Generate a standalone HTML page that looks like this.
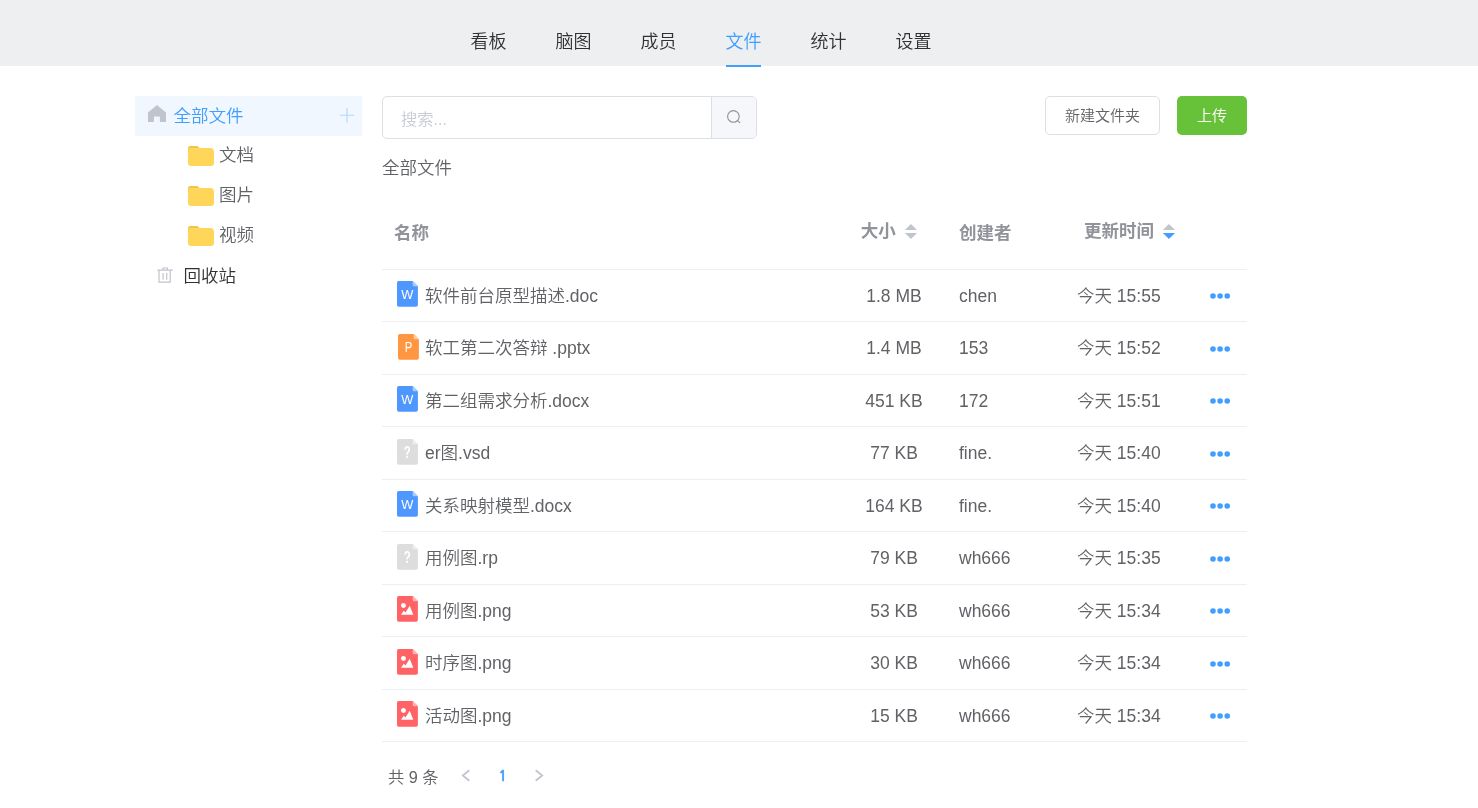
<!DOCTYPE html>
<html lang="zh-CN">
<head>
<meta charset="utf-8">
<title>文件</title>
<style>
*{box-sizing:border-box;margin:0;padding:0}
html,body{width:1478px;height:808px;overflow:hidden;background:#fff}
body{font-family:"Liberation Sans","Noto Sans CJK SC",sans-serif;color:#606266;position:relative;font-weight:350}
#wrap{position:absolute;left:0;top:0;width:1478px;height:808px;will-change:transform}
.abs{position:absolute}
#top{left:0;top:0;width:1478px;height:66px;background:#eeeff1}
.tab{position:absolute;top:28.6px;font-size:18px;line-height:26px;color:#303133;white-space:nowrap}
.tab.on{color:#409eff}
#tabline{left:726px;top:65px;width:35px;height:2px;background:#409eff}
#side-all{left:135px;top:96px;width:227px;height:40px;background:#f0f7ff}
.sl{position:absolute;font-size:17.5px;line-height:26px;white-space:nowrap;color:#606266}
#search{left:382px;top:96px;width:375px;height:43px;border:1px solid #dcdfe6;border-radius:5px;background:#fff}
#search .btn{position:absolute;right:0;top:0;width:45px;height:41px;background:#f5f7fa;border-left:1px solid #dcdfe6;border-radius:0 4px 4px 0}
#search .ph{position:absolute;left:18px;top:10.2px;font-size:16.25px;line-height:24px;color:#c8ccd3}
#newf{left:1045px;top:96px;width:115px;height:39px;border:1px solid #dcdfe6;border-radius:5px;font-size:15px;line-height:37px;text-align:center;color:#606266}
#upl{left:1177px;top:96px;width:70px;height:39px;border-radius:5px;background:#67c23a;font-size:15px;line-height:39px;text-align:center;color:#fff}
#crumb{left:382px;top:154.8px;font-size:17.5px;line-height:26px;color:#606266}
.th{position:absolute;font-size:17.5px;font-weight:bold;color:#909399;line-height:24px;white-space:nowrap}
.hl{position:absolute;left:382px;width:865px;height:1px;background:#ebeef5}
.row{position:absolute;left:382px;width:865px;height:52px;font-size:17.5px;color:#606266}
.row span{position:absolute;top:14px;line-height:24px;white-space:nowrap}
.row .nm{left:43px}
.row .sz{left:458px;width:108px;text-align:center}
.row .cr{left:577px}
.row .tm{left:695px}
.row .dots{position:absolute;left:828.2px;top:23.4px;width:20px;height:6px;fill:#409eff;overflow:visible}
.fold{left:188.1px;width:26px;height:20px}
.ico{position:absolute;left:14.8px;top:11.5px;width:20.9px;height:25.7px;overflow:visible}
</style>
</head>
<body>
<div id="wrap">
<svg width="0" height="0" style="position:absolute">
<defs>
<g id="ic-folder"><path d="M2.5 0H9.5L11.5 2H2.5V6H0V2.5A2.5 2.5 0 0 1 2.5 0z" fill="#f2c54a"/><path d="M0 4.5A2.5 2.5 0 0 1 2.5 2H22.5A3.5 3.5 0 0 1 26 5.5V17A3 3 0 0 1 23 20H3A3 3 0 0 1 0 17z" fill="#ffd659"/></g>
<g id="doc-shape"><path d="M1.8 0H15.7L20.9 5.2V23.9a1.8 1.8 0 0 1-1.8 1.8H1.8a1.8 1.8 0 0 1-1.8-1.8V1.8a1.8 1.8 0 0 1 1.8-1.8z"/></g>
<g id="ic-w"><use href="#doc-shape" fill="#4e97ff"/><path d="M15.7 0L20.9 5.2H17a1.3 1.3 0 0 1-1.3-1.3z" fill="#a9ccff"/><text x="10.25" y="17.7" text-anchor="middle" font-family="Liberation Sans, sans-serif" font-size="12.8" fill="#fff">W</text></g>
<g id="ic-p"><use href="#doc-shape" fill="#ff9742"/><path d="M15.7 0L20.9 5.2H17a1.3 1.3 0 0 1-1.3-1.3z" fill="#ffcba0"/><text x="10.5" y="18.2" text-anchor="middle" font-family="Liberation Sans, sans-serif" font-size="14.6" fill="#fff" textLength="7.6" lengthAdjust="spacingAndGlyphs">P</text></g>
<g id="ic-q"><use href="#doc-shape" fill="#dddddd"/><path d="M15.7 0L20.9 5.2H17a1.3 1.3 0 0 1-1.3-1.3z" fill="#eeeeee"/><text x="10.2" y="18.6" text-anchor="middle" font-family="Liberation Sans, sans-serif" font-size="16" font-weight="bold" fill="#fff" textLength="7" lengthAdjust="spacingAndGlyphs">?</text></g>
<g id="ic-i"><use href="#doc-shape" fill="#ff6366"/><path d="M15.7 0L20.9 5.2H17a1.3 1.3 0 0 1-1.3-1.3z" fill="#ffb1b3"/><circle cx="6.5" cy="9.4" r="2.5" fill="#fff"/><path d="M4 18.7L6.8 14.7L8.5 16.5L12.7 9.8L16.3 18.7z" fill="#fff"/></g>
</defs>
</svg>
<div id="top" class="abs"></div>
<div class="tab" style="left:470.6px">看板</div>
<div class="tab" style="left:555.6px">脑图</div>
<div class="tab" style="left:640.6px">成员</div>
<div class="tab on" style="left:725.6px">文件</div>
<div class="tab" style="left:810.6px">统计</div>
<div class="tab" style="left:895.6px">设置</div>
<div id="tabline" class="abs"></div>

<div id="side-all" class="abs"></div>
<div class="sl" style="left:173.5px;top:102.8px;color:#409eff">全部文件</div>
<div class="sl" style="left:219px;top:142px">文档</div>
<div class="sl" style="left:219px;top:182px">图片</div>
<div class="sl" style="left:219px;top:222px">视频</div>
<div class="sl" style="left:183.5px;top:263.4px;color:#303133">回收站</div>


<svg class="abs" style="left:148px;top:104.5px;width:18px;height:17.5px" viewBox="0 0 18 17.5"><path d="M9 0L18 7.6V17.5H11.9V11.4H5.9V17.5H0V7.6z" fill="#c0c4cc"/></svg>
<svg class="abs" style="left:339.6px;top:108.1px;width:14.6px;height:14.6px" viewBox="0 0 14.6 14.6"><path d="M7.0 0V14.6M0 7.3H14.6" stroke="#b0d6ff" stroke-width="1.15" fill="none"/></svg>
<svg class="abs fold" style="top:146px" viewBox="0 0 26 20"><use href="#ic-folder"/></svg>
<svg class="abs fold" style="top:186px" viewBox="0 0 26 20"><use href="#ic-folder"/></svg>
<svg class="abs fold" style="top:226px" viewBox="0 0 26 20"><use href="#ic-folder"/></svg>
<svg class="abs" style="left:156.5px;top:267px;width:16px;height:16.5px" viewBox="0 0 16 16.5"><path d="M0.4 3.1H15.8M6 3V1H10.4V3M2.0 3.4V15.1H13.2V3.4M6.1 6V12.7M9.7 6V12.7" stroke="#c0c4cc" stroke-width="1.2" fill="none"/></svg>
<svg class="abs" style="left:725px;top:108px;width:17px;height:17px;z-index:3" viewBox="0 0 17 17"><circle cx="8.4" cy="8.4" r="5.8" fill="none" stroke="#909399" stroke-width="1.15"/><path d="M12.6 12.6L14.7 14.7" stroke="#909399" stroke-width="1.15" stroke-linecap="round"/></svg>
<svg class="abs" style="left:904px;top:224px;width:14px;height:15px" viewBox="0 0 14 15"><path d="M0.9 5.9L6.95 0.1L13 5.9z" fill="#c0c4cc"/><path d="M0.9 9L6.95 14.9L13 9z" fill="#c0c4cc"/></svg>
<svg class="abs" style="left:1162px;top:224px;width:14px;height:15px" viewBox="0 0 14 15"><path d="M0.9 5.9L6.95 0.1L13 5.9z" fill="#c0c4cc"/><path d="M0.9 9L6.95 14.9L13 9z" fill="#409eff"/></svg>
<svg class="abs" style="left:461px;top:769px;width:10px;height:13px" viewBox="0 0 10 13"><path d="M8.3 1.2L1.8 6.5L8.3 11.8" fill="none" stroke="#c0c4cc" stroke-width="1.8"/></svg>
<svg class="abs" style="left:533.6px;top:769px;width:10px;height:13px" viewBox="0 0 10 13"><path d="M1.7 1.2L8.2 6.5L1.7 11.8" fill="none" stroke="#c0c4cc" stroke-width="1.8"/></svg>
<div id="search" class="abs"><div class="ph">搜索...</div><div class="btn"></div></div>
<div id="newf" class="abs">新建文件夹</div>
<div id="upl" class="abs">上传</div>
<div id="crumb" class="abs">全部文件</div>

<div class="th" style="left:394px;top:221px">名称</div>
<div class="th" style="left:860.8px;top:219px">大小</div>
<div class="th" style="left:959px;top:221px">创建者</div>
<div class="th" style="left:1084px;top:219px">更新时间</div>

<div id="rows">
<div class="hl" style="top:269px"></div>
<div class="row" style="top:269.9px"><svg class="ico" viewBox="0 0 20.9 25.7"><use href="#ic-w"/></svg><span class="nm">软件前台原型描述.doc</span><span class="sz">1.8 MB</span><span class="cr">chen</span><span class="tm">今天 15:55</span><svg class="dots" viewBox="0 0 20 6"><circle cx="3" cy="3" r="2.8"/><circle cx="10.1" cy="3" r="2.8"/><circle cx="17.2" cy="3" r="2.8"/></svg></div>
<div class="hl" style="top:321px"></div>
<div class="row" style="top:322.4px"><svg class="ico" style="left:15.8px" viewBox="0 0 20.9 25.7"><use href="#ic-p"/></svg><span class="nm">软工第二次答辩 .pptx</span><span class="sz">1.4 MB</span><span class="cr">153</span><span class="tm">今天 15:52</span><svg class="dots" viewBox="0 0 20 6"><circle cx="3" cy="3" r="2.8"/><circle cx="10.1" cy="3" r="2.8"/><circle cx="17.2" cy="3" r="2.8"/></svg></div>
<div class="hl" style="top:374px"></div>
<div class="row" style="top:374.9px"><svg class="ico" viewBox="0 0 20.9 25.7"><use href="#ic-w"/></svg><span class="nm">第二组需求分析.docx</span><span class="sz">451 KB</span><span class="cr">172</span><span class="tm">今天 15:51</span><svg class="dots" viewBox="0 0 20 6"><circle cx="3" cy="3" r="2.8"/><circle cx="10.1" cy="3" r="2.8"/><circle cx="17.2" cy="3" r="2.8"/></svg></div>
<div class="hl" style="top:426px"></div>
<div class="row" style="top:427.4px"><svg class="ico" viewBox="0 0 20.9 25.7"><use href="#ic-q"/></svg><span class="nm">er图.vsd</span><span class="sz">77 KB</span><span class="cr">fine.</span><span class="tm">今天 15:40</span><svg class="dots" viewBox="0 0 20 6"><circle cx="3" cy="3" r="2.8"/><circle cx="10.1" cy="3" r="2.8"/><circle cx="17.2" cy="3" r="2.8"/></svg></div>
<div class="hl" style="top:479px"></div>
<div class="row" style="top:479.9px"><svg class="ico" viewBox="0 0 20.9 25.7"><use href="#ic-w"/></svg><span class="nm">关系映射模型.docx</span><span class="sz">164 KB</span><span class="cr">fine.</span><span class="tm">今天 15:40</span><svg class="dots" viewBox="0 0 20 6"><circle cx="3" cy="3" r="2.8"/><circle cx="10.1" cy="3" r="2.8"/><circle cx="17.2" cy="3" r="2.8"/></svg></div>
<div class="hl" style="top:531px"></div>
<div class="row" style="top:532.4px"><svg class="ico" viewBox="0 0 20.9 25.7"><use href="#ic-q"/></svg><span class="nm">用例图.rp</span><span class="sz">79 KB</span><span class="cr">wh666</span><span class="tm">今天 15:35</span><svg class="dots" viewBox="0 0 20 6"><circle cx="3" cy="3" r="2.8"/><circle cx="10.1" cy="3" r="2.8"/><circle cx="17.2" cy="3" r="2.8"/></svg></div>
<div class="hl" style="top:584px"></div>
<div class="row" style="top:584.9px"><svg class="ico" viewBox="0 0 20.9 25.7"><use href="#ic-i"/></svg><span class="nm">用例图.png</span><span class="sz">53 KB</span><span class="cr">wh666</span><span class="tm">今天 15:34</span><svg class="dots" viewBox="0 0 20 6"><circle cx="3" cy="3" r="2.8"/><circle cx="10.1" cy="3" r="2.8"/><circle cx="17.2" cy="3" r="2.8"/></svg></div>
<div class="hl" style="top:636px"></div>
<div class="row" style="top:637.4px"><svg class="ico" viewBox="0 0 20.9 25.7"><use href="#ic-i"/></svg><span class="nm">时序图.png</span><span class="sz">30 KB</span><span class="cr">wh666</span><span class="tm">今天 15:34</span><svg class="dots" viewBox="0 0 20 6"><circle cx="3" cy="3" r="2.8"/><circle cx="10.1" cy="3" r="2.8"/><circle cx="17.2" cy="3" r="2.8"/></svg></div>
<div class="hl" style="top:689px"></div>
<div class="row" style="top:689.9px"><svg class="ico" viewBox="0 0 20.9 25.7"><use href="#ic-i"/></svg><span class="nm">活动图.png</span><span class="sz">15 KB</span><span class="cr">wh666</span><span class="tm">今天 15:34</span><svg class="dots" viewBox="0 0 20 6"><circle cx="3" cy="3" r="2.8"/><circle cx="10.1" cy="3" r="2.8"/><circle cx="17.2" cy="3" r="2.8"/></svg></div>
<div class="hl" style="top:741px"></div>
</div>
<div class="abs" style="left:388px;top:764.8px;font-size:16.25px;line-height:24px;color:#606266">共 9 条</div>
<div class="abs" style="left:498.5px;top:763.6px;font-size:14px;line-height:24px;color:#409eff;-webkit-text-stroke:0.5px #409eff;font-weight:bold;font-family:'NanumGothic',sans-serif">1</div>
</div>
</body>
</html>
